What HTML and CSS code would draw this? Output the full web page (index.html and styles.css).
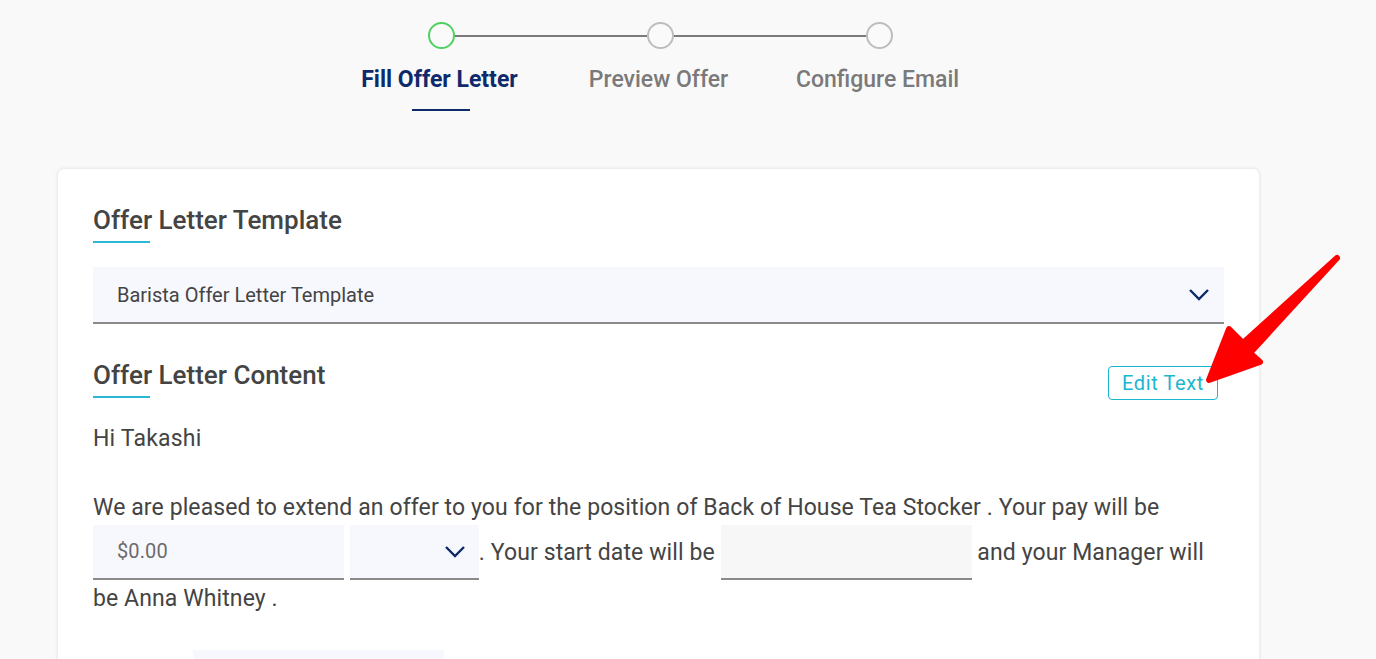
FILE: index.html
```html
<!DOCTYPE html>
<html>
<head>
<meta charset="utf-8">
<link rel="stylesheet" href="styles.css">
</head>
<body>
<div class="page">
  <div class="stepper">
    <div class="track">
      <span class="dot active"></span><span class="line"></span><span class="dot"></span><span class="line"></span><span class="dot"></span>
    </div>
    <div class="labels">
      <div class="label current">Fill Offer Letter</div>
      <div class="label">Preview Offer</div>
      <div class="label">Configure Email</div>
    </div>
  </div>

  <div class="card">
    <h2 class="title">Offer Letter Template</h2>
    <div class="select big">
      <span>Barista Offer Letter Template</span>
      <svg class="chev" width="22" height="14" viewBox="0 0 22 14"><path d="M2 2 L11 11 L20 2" fill="none" stroke="#0d2a66" stroke-width="2.4"/></svg>
    </div>
    <div class="content-head">
      <h2 class="title">Offer Letter Content</h2>
      <button class="edit">Edit Text</button>
    </div>
    <p class="greet">Hi Takashi</p>
    <p class="body">We are pleased to extend an offer to you for the position of Back of House Tea Stocker . Your pay will be <span class="field pay">$0.00</span> <span class="field freq"><svg class="chev" width="22" height="14" viewBox="0 0 22 14"><path d="M2 2 L11 11 L20 2" fill="none" stroke="#0d2a66" stroke-width="2.4"/></svg></span>. Your start date will be <span class="field date"></span> and your Manager will be Anna Whitney .</p>
    <p class="body second">Shift&nbsp;is <span class="field role"></span></p>
  </div>

  <svg class="arrow" width="160" height="150" viewBox="1195 250 160 150">
    <polygon points="1209,380 1229,329 1243,343 1337,258 1250,353 1260,362" fill="#f00" stroke="#f00" stroke-width="6" stroke-linejoin="round"/>
  </svg>
</div>
</body>
</html>
```

FILE: styles.css
```css
* { box-sizing: border-box; }
html, body { margin: 0; padding: 0; }
body {
  background: #f9f9f9;
  font-family: Roboto, "Noto Sans", sans-serif;
  color: #444;
  height: 659px;
  overflow: hidden;
}
.page {
  position: relative;
  width: 1201px;
  margin-left: 58px;
}
.stepper {
  display: flex;
  flex-direction: column;
  align-items: center;
  padding-top: 22px;
  padding-left: 4px;
}
.track {
  display: flex;
  align-items: center;
}
.dot {
  width: 27px;
  height: 27px;
  border-radius: 50%;
  border: 2px solid #bdbdbd;
  background: #fafafa;
}
.dot.active { border-color: #4fd060; }
.line {
  width: 192px;
  height: 2px;
  background: #7a7a7a;
}
.labels {
  display: flex;
  margin-top: 16px;
  margin-left: -4px;
}
.label {
  width: 219px;
  text-align: center;
  font-size: 23px;
  line-height: 30px;
  font-weight: 500;
  color: #7a7a7a;
  display: flex;
  flex-direction: column;
  align-items: center;
}
.label.current {
  color: #0e2a6b;
  font-weight: 700;
}
.label.current::after {
  content: "";
  width: 58px;
  height: 2px;
  background: #0e2a6b;
  margin-top: 14px;
  margin-left: 2px;
}
.card {
  margin-top: 58px;
  background: #fff;
  border-radius: 6px;
  box-shadow: 0 0 4px rgba(0,0,0,0.12);
  padding: 35px 35px 40px;
  height: 560px;
}
.title {
  margin: 0;
  font-size: 26px;
  line-height: 32px;
  font-weight: 500;
  color: #444;
  display: flex;
  flex-direction: column;
}
.title::after {
  content: "";
  width: 57px;
  height: 2px;
  background: #2bb8d5;
  margin-top: 5px;
}
.select.big {
  margin-top: 24px;
  height: 57px;
  background: #f7f8fd;
  border-bottom: 2px solid #8a8a8a;
  display: flex;
  align-items: center;
  justify-content: space-between;
  padding: 0 14px 0 24px;
  font-size: 20px;
  color: #444;
}
.content-head {
  margin-top: 35px;
  display: flex;
  justify-content: space-between;
  align-items: flex-start;
}
.edit {
  margin-top: 7px;
  margin-right: 6px;
  font-family: Roboto, sans-serif;
  font-size: 20px;
  letter-spacing: 0.6px;
  color: #1bb6cf;
  background: #fff;
  border: 1.5px solid #1bb6cf;
  border-radius: 4px;
  height: 34px;
  width: 110px;
  padding: 0;
}
.greet {
  margin: 16px 0 0;
  font-size: 23px;
  line-height: 46px;
  letter-spacing: 0.2px;
}
.body {
  margin: 23px 0 0;
  font-size: 23px;
  line-height: 45px;
  letter-spacing: 0.1px;
}
.body.second { margin-top: 33px; }
.field {
  display: inline-flex;
  align-items: center;
  vertical-align: middle;
  height: 55px;
  margin: -6px 0 -4px;
  background: #f7f8fd;
  border-bottom: 2px solid #8a8a8a;
  font-size: 20px;
  color: #6b6b6b;
}
.pay { width: 251px; padding-left: 24px; }
.freq { width: 129px; justify-content: flex-end; padding-right: 13px; }
.date { width: 251px; background: #f7f7f7; }
.role { width: 251px; border-bottom: none; margin-left: 23px; }
.arrow {
  position: absolute;
  left: 1137px;
  top: 250px;
}
```
